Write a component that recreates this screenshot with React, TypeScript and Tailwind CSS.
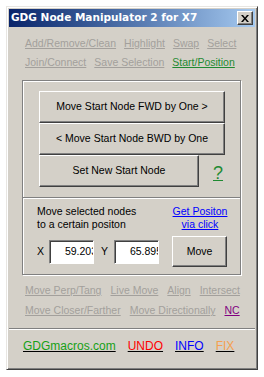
const ui = "font-['Liberation_Sans',Arial,sans-serif] text-[10.5px]";

function WinButton({ className = '', children }: { className?: string; children: React.ReactNode }) {
  return (
    <button
      className={`flex items-center justify-center bg-[#d4d0c8] text-black border border-t-white border-l-white border-r-[#404040] border-b-[#404040] shadow-[inset_-1px_-1px_0_#808080] ${className}`}
    >
      {children}
    </button>
  );
}

function Field({ value }: { value: string }) {
  return (
    <div className="h-[24px] w-[45px] overflow-hidden bg-white border border-t-[#808080] border-l-[#808080] border-r-white border-b-white shadow-[inset_1px_1px_0_#404040] flex items-center justify-end">
      <span className="whitespace-nowrap pl-[4px] -mr-[4px]">{value}</span>
    </div>
  );
}

const grey = 'text-[#a3a09c] underline';

export default function App() {
  return (
    <div className={`w-[264px] h-[377px] bg-white pt-[6px] pl-[6px] ${ui}`}>
      <div className="w-[252px] h-[364px] bg-[#d4d0c8] border border-t-[#e8e6e2] border-l-[#e8e6e2] border-r-[#404040] border-b-[#404040] shadow-[inset_1px_1px_0_white,inset_-1px_-1px_0_#808080] p-[2px]">
        <div className="h-[18px] flex items-center justify-between pl-[2px] pr-[2px] bg-gradient-to-r from-[#0a246a] to-[#a6caf0]">
          <span className="font-['DejaVu_Sans',sans-serif] text-white font-bold text-[10.5px] whitespace-nowrap">GDG Node Manipulator 2 for X7</span>
          <WinButton className="w-[16px] h-[14px]">
            <svg width="8" height="7" viewBox="0 0 8 7">
              <path d="M0 0h2l2 2.5L6 0h2L5 3.5 8 7H6L4 4.5 2 7H0l3-3.5z" fill="black" />
            </svg>
          </WinButton>
        </div>

        <div className="pt-[7px] pl-[16px]">
          <div className="h-[19px] flex items-center gap-[8px] whitespace-nowrap">
            <span className={grey}>Add/Remove/Clean</span>
            <span className={grey}>Highlight</span>
            <span className={grey}>Swap</span>
            <span className={grey}>Select</span>
          </div>
          <div className="h-[19px] flex items-center gap-[8px] whitespace-nowrap">
            <span className={grey}>Join/Connect</span>
            <span className={grey}>Save Selection</span>
            <span className="text-[#1f8a32] underline">Start/Position</span>
          </div>
        </div>

        <div className="mt-[8px] ml-[13px] w-[219px] border border-[#808080] shadow-[1px_1px_0_white,inset_1px_1px_0_white]">
          <div className="pt-[10px] pl-[16px]">
            <WinButton className="w-[186px] h-[32px]">Move Start Node FWD by One &gt;</WinButton>
            <WinButton className="w-[186px] h-[32px]">&lt; Move Start Node BWD by One</WinButton>
            <div className="flex items-center">
              <WinButton className="w-[160px] h-[32px]">Set New Start Node</WinButton>
              <span className="ml-[14px] mt-[4px] text-[18px] leading-none text-[#1f8a32] underline">?</span>
            </div>
          </div>
          <div className="mt-[10px] h-[2px] border-t border-[#808080] bg-white" />
          <div className="pt-[6px] pl-[14px] pr-[12px] pb-[7px]">
            <div className="flex justify-between">
              <div className="leading-[13px]">
                <div>Move selected nodes</div>
                <div>to a certain positon</div>
              </div>
              <div className="leading-[13px] text-[#0000ff] underline text-center w-[56px] whitespace-nowrap">
                <div>Get Positon</div>
                <div>via click</div>
              </div>
            </div>
            <div className="mt-[5px] h-[31px] flex items-center">
              <span className="w-[12px]">X</span>
              <Field value="59.203" />
              <span className="ml-[7px] w-[13px]">Y</span>
              <Field value="65.895" />
              <WinButton className="ml-[13px] w-[55px] h-[31px]">Move</WinButton>
            </div>
          </div>
        </div>

        <div className="pt-[6px] pl-[16px]">
          <div className="h-[20px] flex items-center gap-[9px] whitespace-nowrap">
            <span className={grey}>Move Perp/Tang</span>
            <span className={grey}>Live Move</span>
            <span className={grey}>Align</span>
            <span className={grey}>Intersect</span>
          </div>
          <div className="h-[20px] flex items-center gap-[9px] whitespace-nowrap">
            <span className={grey}>Move Closer/Farther</span>
            <span className={grey}>Move Directionally</span>
            <span className="text-[#800080] underline">NC</span>
          </div>
        </div>

        <div className="mt-[7px] h-[2px] border-t border-[#808080] bg-white" />

        <div className="mt-[8px] h-[16px] pl-[14px] flex items-center gap-[12px] text-[12px] whitespace-nowrap underline">
          <span className="text-[#16a016]">GDGmacros.com</span>
          <span className="text-[#ff0000]">UNDO</span>
          <span className="text-[#0000ff]">INFO</span>
          <span className="text-[#f5a050]">FIX</span>
        </div>
      </div>
    </div>
  );
}
